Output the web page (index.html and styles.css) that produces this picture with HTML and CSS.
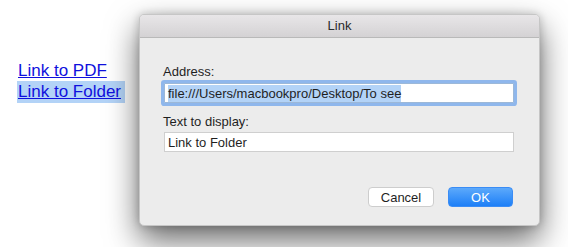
FILE: index.html
```html
<!DOCTYPE html>
<html lang="en">
  <head>
    <meta charset="UTF-8" />
    <title>Link</title>
    <link rel="stylesheet" href="styles.css">
  </head>
  <body>
    <div class="doc">
      <a href="#" class="doc-link">Link to PDF</a>
      <a href="#" class="doc-link selected">Link to Folder</a>
    </div>

    <div class="dialog">
      <div class="titlebar">Link</div>
      <div class="dialog-body">
        <label class="field-label">Address:</label>
        <div class="field focused">
          <span class="sel">file:///Users/macbookpro/Desktop/To see</span>
        </div>
        <label class="field-label second">Text to display:</label>
        <div class="field">Link to Folder</div>
        <div class="buttons">
          <button type="button" class="btn cancel-btn">Cancel</button>
          <button type="button" class="btn ok-btn">OK</button>
        </div>
      </div>
    </div>
  </body>
</html>
```

FILE: styles.css
```css
body {
  margin: 0;
  background-color: #fff;
  font-family: "Liberation Sans", Arial, sans-serif;
  width: 568px;
  height: 247px;
  overflow: hidden;
  position: relative;
}

.doc {
  padding: 60px 0 0 17px;
  display: flex;
  flex-direction: column;
  align-items: flex-start;
}

.doc-link {
  color: #1010dd;
  font-size: 17px;
  line-height: 21px;
  padding: 0 1px;
  text-decoration: underline;
}

.doc-link.selected {
  background-color: #b3d3f7;
  padding: 0 4px 1px 1px;
}

.dialog {
  position: absolute;
  left: 139px;
  top: 14px;
  width: 401px;
  height: 212px;
  border-radius: 5px;
  background-color: #ececec;
  border: 1px solid #c6c6c6;
  box-sizing: border-box;
  box-shadow: 0 14px 32px rgba(0, 0, 0, 0.6), 0 0 8px rgba(0, 0, 0, 0.2);
  overflow: hidden;
}

.titlebar {
  height: 22px;
  line-height: 22px;
  text-align: center;
  font-size: 13px;
  color: #2a2a2a;
  background: linear-gradient(#e8e6e8, #d4d2d4);
  border-bottom: 1px solid #b9b9b9;
}

.dialog-body {
  padding: 26px 0 0 23px;
  font-size: 13px;
  color: #1f1f1f;
}

.field-label {
  display: block;
  line-height: 16px;
  margin-bottom: 2px;
}

.field-label.second {
  margin-top: 11px;
}

.field {
  width: 350px;
  height: 20px;
  line-height: 20px;
  box-sizing: border-box;
  background-color: #fff;
  border: 1px solid #cfcfcf;
  padding: 0 0 0 3px;
  margin-left: 1px;
}

.field.focused {
  border: 1px solid #9cb8d8;
  box-shadow: 0 0 0 3px #8fb7ec;
  border-radius: 1px;
  margin-top: 3px;
}

.sel {
  background-color: #b3d3f7;
  display: inline-block;
  line-height: 17px;
}

.buttons {
  display: flex;
  justify-content: flex-end;
  gap: 14px;
  padding-right: 26px;
  margin-top: 35px;
}

.btn {
  height: 20px;
  border-radius: 4px;
  font-family: "Liberation Sans", Arial, sans-serif;
  font-size: 13px;
  padding: 0;
  cursor: pointer;
}

.cancel-btn {
  width: 66px;
  background-color: #fff;
  color: #1f1f1f;
  border: 1px solid #cdcdcd;
}

.ok-btn {
  width: 65px;
  background: linear-gradient(#5ca9fb, #1d7ff7);
  border: 1px solid #3a8cf5;
  color: #fff;
}
```
